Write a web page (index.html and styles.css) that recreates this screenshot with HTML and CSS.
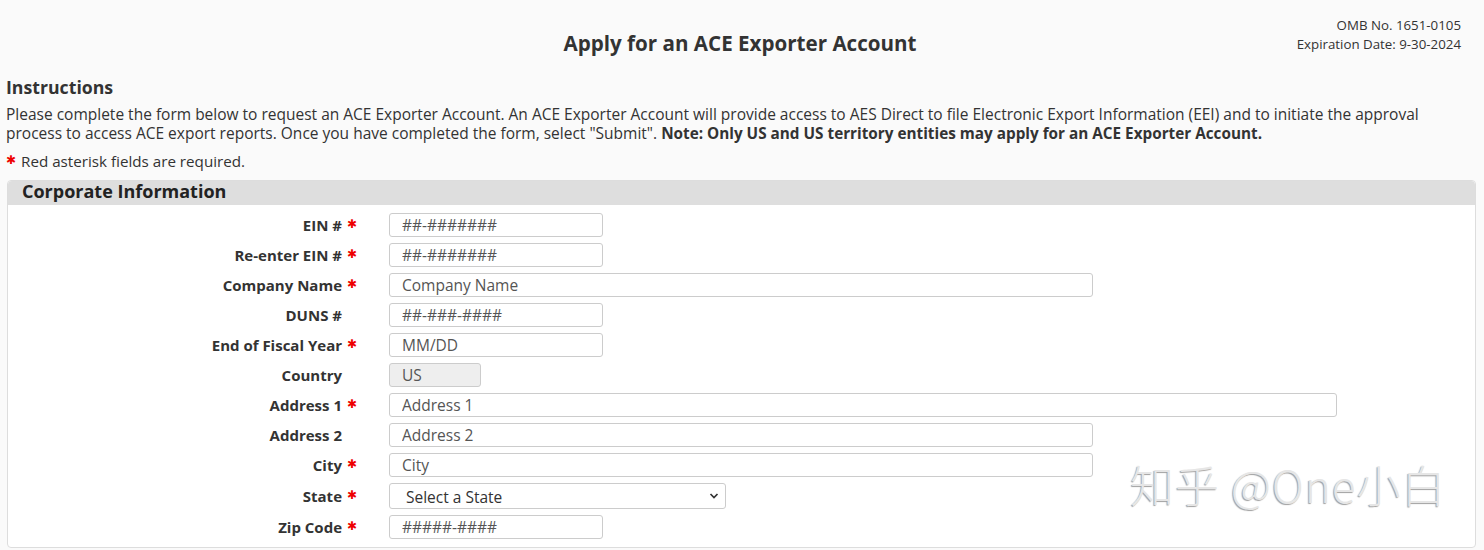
FILE: index.html
```html
<!DOCTYPE html>
<html lang="en">
<head>
<meta charset="utf-8">
<title>Apply for an ACE Exporter Account</title>
<link rel="stylesheet" href="styles.css">
</head>
<body>
<header class="top">
  <div class="top-spacer"></div>
  <h1 class="title">Apply for an ACE Exporter Account</h1>
  <div class="omb">
    <div>OMB No. 1651-0105</div>
    <div>Expiration Date: 9-30-2024</div>
  </div>
</header>

<section class="instructions">
  <h2 class="instr-title">Instructions</h2>
  <p class="instr-text">Please complete the form below to request an ACE Exporter Account. An ACE Exporter Account will provide access to AES Direct to file Electronic Export Information (EEI) and to initiate the approval process to access ACE export reports. Once you have completed the form, select "Submit". <strong>Note: Only US and US territory entities may apply for an ACE Exporter Account.</strong></p>
  <p class="req-note"><span class="star">✱</span> Red asterisk fields are required.</p>
</section>

<section class="panel">
  <div class="panel-head">Corporate Information</div>
  <div class="panel-body">
    <div class="row"><label class="lbl">EIN #<span class="star">✱</span></label><input class="field w-sm" placeholder="##-#######"></div>
    <div class="row"><label class="lbl">Re-enter EIN #<span class="star">✱</span></label><input class="field w-sm" placeholder="##-#######"></div>
    <div class="row"><label class="lbl">Company Name<span class="star">✱</span></label><input class="field w-md" placeholder="Company Name"></div>
    <div class="row"><label class="lbl">DUNS #<span class="star"></span></label><input class="field w-sm" placeholder="##-###-####"></div>
    <div class="row"><label class="lbl">End of Fiscal Year<span class="star">✱</span></label><input class="field w-sm" placeholder="MM/DD"></div>
    <div class="row"><label class="lbl">Country<span class="star"></span></label><input class="field w-xs disabled" value="US" disabled></div>
    <div class="row"><label class="lbl">Address 1<span class="star">✱</span></label><input class="field w-lg" placeholder="Address 1"></div>
    <div class="row"><label class="lbl">Address 2<span class="star"></span></label><input class="field w-md" placeholder="Address 2"></div>
    <div class="row"><label class="lbl">City<span class="star">✱</span></label><input class="field w-md" placeholder="City"></div>
    <div class="row row-select"><label class="lbl">State<span class="star">✱</span></label>
      <div class="select-wrap">
        <select class="field select"><option>Select a State</option></select>
        <svg class="chev" width="10" height="8" viewBox="0 0 10 8"><path d="M1.5 2 L5 5.5 L8.5 2" fill="none" stroke="#333" stroke-width="1.7"/></svg>
      </div>
    </div>
    <div class="row"><label class="lbl">Zip Code<span class="star">✱</span></label><input class="field w-sm" placeholder="#####-####"></div>
  </div>
  <div class="watermark">知乎 @One小白</div>
</section>
</body>
</html>
```

FILE: styles.css
```css
* { box-sizing: border-box; }
html, body {
  margin: 0;
  padding: 0;
  background: #fafafa;
  color: #333;
  font-family: "Open Sans", "Noto Sans", sans-serif;
}
.top {
  display: grid;
  grid-template-columns: 1fr auto 1fr;
  padding: 16px 0 0 0;
  height: 75px;
}
.title {
  margin: 13px 0 0 0;
  font-size: 20.6px;
  line-height: 28px;
  font-weight: 700;
  color: #333;
  position: relative;
  left: -2px;
}
.omb {
  text-align: right;
  padding-right: 23px;
  font-size: 13.3px;
  line-height: 19px;
  color: #333;
}
.instructions {
  padding: 0 6px;
}
.instr-title {
  margin: 0;
  font-size: 17.7px;
  line-height: 24px;
  font-weight: 700;
}
.instr-text {
  margin: 6px 0 0 0;
  font-size: 15.5px;
  line-height: 19px;
}
.instr-text strong { font-weight: 700; font-size: 15.3px; }
.req-note {
  margin: 9px 0 0 0;
  font-size: 15.2px;
  line-height: 19px;
}
.star {
  color: #e00;
  font-family: "DejaVu Sans", sans-serif;
  font-weight: 700;
  font-size: 12px;
  position: relative;
  top: -3px;
}
.req-note .star { margin-right: 1px; }
.panel {
  position: relative;
  margin: 7px 8px 0 7px;
  border: 1px solid #ddd;
  border-radius: 4px;
  background: #fff;
}
.panel-head {
  background: #dedede;
  height: 24px;
  line-height: 20px;
  padding-left: 14px;
  font-size: 18px;
  font-weight: 700;
  color: #222;
  border-radius: 4px 4px 0 0;
}
.panel-body {
  display: flex;
  flex-direction: column;
  gap: 6px;
  padding: 8px 0 8px 0;
}
.row {
  display: grid;
  grid-template-columns: 352px auto;
  column-gap: 29px;
  align-items: center;
  height: 24px;
}
.row-select { height: 26px; }
.lbl {
  text-align: right;
  font-size: 15px;
  font-weight: 700;
  color: #333;
  white-space: nowrap;
}
.lbl .star {
  display: inline-block;
  width: 18px;
  text-align: left;
  padding-left: 5px;
  top: -3px;
}
.field {
  height: 24px;
  border: 1px solid #ccc;
  border-radius: 3px;
  padding: 0 12px;
  font-family: "Open Sans", sans-serif;
  font-size: 15.5px;
  color: #555;
  background: #fff;
  outline: none;
}
.field::placeholder { color: #555; opacity: 1; }
.w-xs { width: 92px; }
.w-sm { width: 214px; }
.w-md { width: 704px; }
.w-lg { width: 948px; }
.disabled { background: #eee; color: #555; }
.select-wrap {
  position: relative;
  width: 337px;
}
.select {
  appearance: none;
  -webkit-appearance: none;
  width: 337px;
  height: 26px;
  padding: 2px 16px 0 16px;
  color: #333;
}
.chev {
  position: absolute;
  right: 7px;
  top: 9px;
}
.watermark {
  position: absolute;
  left: 1122px;
  top: 278px;
  font-family: "Noto Sans CJK SC", sans-serif;
  font-weight: 300;
  font-size: 44px;
  line-height: 50px;
  color: #e6e6e6;
  text-shadow: -1px 1px 1px #a0a0a0;
  letter-spacing: 1px;
  white-space: nowrap;
  pointer-events: none;
}
```
